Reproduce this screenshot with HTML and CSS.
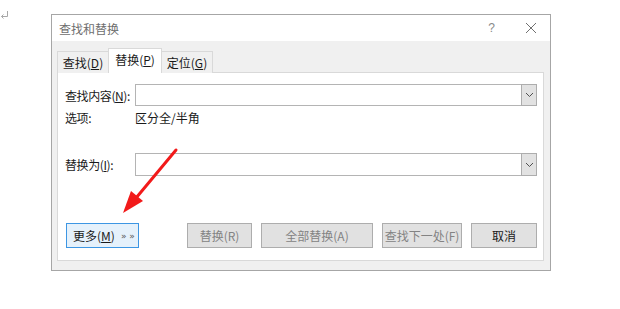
FILE: index.html
```html
<!DOCTYPE html>
<html lang="zh-CN">
<head>
<meta charset="utf-8">
<title>查找和替换</title>
<link rel="stylesheet" href="styles.css">
</head>
<body>
<svg class="para-mark" width="10" height="10" viewBox="0 0 10 10"><path d="M7.5 1 V6.5 H1.5 M3.5 4.5 L1.5 6.5 L3.5 8.5" fill="none" stroke="#a8a8a8" stroke-width="1"/></svg>
<div class="page">
  <div class="dialog">
    <div class="titlebar">
      <span class="title">查找和替换</span>
      <span class="help">?</span>
      <svg class="close" width="12" height="12" viewBox="0 0 12 12"><path d="M1 1 L11 11 M11 1 L1 11" stroke="#707070" stroke-width="1"/></svg>
    </div>
    <div class="client">
      <div class="tabs">
        <div class="tab">查找(<u>D</u>)</div>
        <div class="tab active">替换(<u>P</u>)</div>
        <div class="tab">定位(<u>G</u>)</div>
      </div>
      <div class="panel">
        <div class="row row-find">
          <span class="label">查找内容(<u>N</u>):</span>
          <div class="combo"><div class="combo-text"></div><div class="combo-btn"><svg width="9" height="6" viewBox="0 0 9 6"><path d="M1 1 L4.5 4.5 L8 1" fill="none" stroke="#505050" stroke-width="1"/></svg></div></div>
        </div>
        <div class="row row-opts">
          <span class="label">选项:</span>
          <span class="opt">区分全/半角</span>
        </div>
        <div class="row row-repl">
          <span class="label">替换为(<u>I</u>):</span>
          <div class="combo"><div class="combo-text"></div><div class="combo-btn"><svg width="9" height="6" viewBox="0 0 9 6"><path d="M1 1 L4.5 4.5 L8 1" fill="none" stroke="#505050" stroke-width="1"/></svg></div></div>
        </div>
        <div class="buttons">
          <button class="btn more">更多(<u>M</u>) <span class="chev">» »</span></button>
          <button class="btn dis b-repl">替换(R)</button>
          <button class="btn dis b-all">全部替换(A)</button>
          <button class="btn dis b-next">查找下一处(F)</button>
          <button class="btn b-cancel">取消</button>
        </div>
      </div>
    </div>
  </div>
</div>
<svg class="arrow" width="620" height="309" viewBox="0 0 620 309">
  <line x1="176" y1="150" x2="136" y2="198" stroke="#f21a1a" stroke-width="3" stroke-linecap="round"/>
  <polygon points="123,213 131,191 143,201" fill="#f21a1a"/>
</svg>
</body>
</html>
```

FILE: styles.css
```css
html, body {
  margin: 0;
  padding: 0;
  background: #ffffff;
}
body {
  width: 620px;
  height: 309px;
  overflow: hidden;
  position: relative;
  font-family: "Microsoft YaHei", "Noto Sans CJK SC", "Noto Sans", sans-serif;
  font-size: 12px;
  color: #1a1a1a;
}
u { text-decoration: underline; text-underline-offset: 1px; }
.para-mark {
  position: absolute;
  left: 0;
  top: 10px;
}
.page {
  padding: 14px 0 0 51px;
}
.dialog {
  box-sizing: border-box;
  width: 500px;
  height: 257px;
  border: 1px solid #a6a6a6;
  background: #f0f0f0;
  display: flex;
  flex-direction: column;
}
.titlebar {
  height: 26px;
  background: #ffffff;
  display: flex;
  align-items: center;
  padding-left: 7px;
}
.title {
  color: #6e6e6e;
  font-size: 12px;
  flex: 1;
}
.help {
  color: #8a8a8a;
  font-size: 12px;
  font-family: "Liberation Sans", sans-serif;
  margin-right: 30px;
}
.close {
  margin-right: 13px;
}
.client {
  flex: 1;
  padding: 8px 6px 9px 5px;
  display: flex;
  flex-direction: column;
}
.tabs {
  display: flex;
  align-items: flex-end;
  height: 24px;
  position: relative;
  z-index: 1;
  margin-bottom: -1px;
}
.tab {
  box-sizing: border-box;
  height: 22px;
  border: 1px solid #d9d9d9;
  border-bottom: none;
  background: #f0f0f0;
  display: flex;
  align-items: center;
  justify-content: center;
  color: #1a1a1a;
  margin-right: -1px;
}
.tab:nth-child(1) { width: 52px; }
.tab:nth-child(2) { width: 54px; }
.tab:nth-child(3) { width: 52px; }
.tab.active {
  height: 25px;
  background: #ffffff;
  padding-bottom: 3px;
}
.panel {
  flex: 1;
  background: #ffffff;
  border: 1px solid #d9d9d9;
  padding: 11px 6px 0 7px;
  display: flex;
  flex-direction: column;
}
.row {
  display: flex;
  align-items: center;
}
.label {
  width: 70px;
  flex: none;
  white-space: nowrap;
  letter-spacing: -0.4px;
}
.combo {
  flex: 1;
  box-sizing: border-box;
  height: 22px;
  border: 1px solid #b4b4b4;
  display: flex;
}
.combo-text { flex: 1; }
.combo-btn {
  box-sizing: border-box;
  width: 16px;
  margin: -1px -1px -1px 0;
  height: 22px;
  background: #e2e2e2;
  border: 1px solid #adadad;
  display: flex;
  align-items: center;
  justify-content: center;
}
.row-opts {
  margin-top: 3px;
  height: 17px;
}
.row-repl {
  margin-top: 27px;
}
.row-repl .combo { height: 23px; }
.row-repl .combo-btn { height: 23px; }
.buttons {
  display: flex;
  margin-top: 47px;
  padding-left: 1px;
}
.btn {
  box-sizing: border-box;
  height: 25px;
  font: inherit;
  font-size: 12px;
  background: #e1e1e1;
  border: 1px solid #adadad;
  color: #1a1a1a;
  padding: 0;
  margin: 0 9px 0 0;
  display: flex;
  align-items: center;
  justify-content: center;
}
.btn.dis { color: #838383; }
.more {
  width: 73px;
  background: #e5f1fb;
  border-color: #3d96e3;
  margin-right: 48px;
  justify-content: flex-start;
  padding-left: 6px;
}
.chev {
  font-size: 9px;
  color: #555;
  margin-left: 6px;
  letter-spacing: 0;
  font-family: "DejaVu Sans", sans-serif;
}
.b-repl { width: 65px; }
.b-all { width: 112px; }
.b-next { width: 80px; }
.b-cancel { width: 66px; margin-right: 0; }
.arrow {
  position: absolute;
  left: 0;
  top: 0;
  pointer-events: none;
}
```
